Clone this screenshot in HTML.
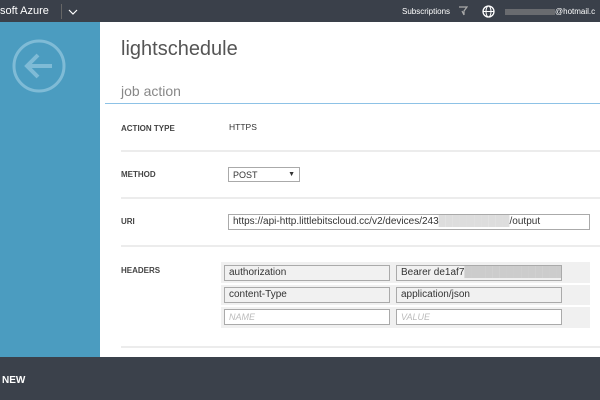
<!DOCTYPE html>
<html><head><style>
*{margin:0;padding:0;box-sizing:border-box}
body{width:600px;height:400px;overflow:hidden;position:relative;font-family:"Liberation Sans",sans-serif;background:#fff;color:#333}
.a{position:absolute}
.top{left:0;top:0;width:600px;height:22px;background:#3a404a;color:#fff}
.side{left:0;top:22px;width:100px;height:335px;background:#4b9cc0}
.foot{left:0;top:357px;width:600px;height:43px;background:#3b414b;color:#fff;font-weight:bold;font-size:10px}
.lbl{font-size:8px;font-weight:bold;color:#444;left:121px}
.hr{left:121px;width:479px;height:2px;background:#ececec}
.box{font-size:10px;border:1px solid #aaa;height:16px;line-height:14px;padding-left:4px;white-space:nowrap;overflow:hidden}
.g{background:#f1f1f1}
</style></head><body>
<div class="a top">
 <div class="a" style="left:0;top:5px;font-size:11px">soft Azure</div>
 <div class="a" style="left:61px;top:4px;width:1px;height:15px;background:#666"></div>
 <svg class="a" style="left:68px;top:9px" width="10" height="6"><path d="M1 1L5 5L9 1" fill="none" stroke="#fff" stroke-width="1.2"/></svg>
 <div class="a" style="left:402px;top:7px;font-size:8px">Subscriptions</div>
 <svg class="a" style="left:458px;top:6px" width="10" height="10"><path d="M1 1H9L6 5V9M4 5L6 9" fill="none" stroke="#aaa" stroke-width="1.2"/></svg>
 <svg class="a" style="left:482px;top:5px" width="13" height="13"><circle cx="6.5" cy="6.5" r="5.5" fill="none" stroke="#fff" stroke-width="1.3"/><ellipse cx="6.5" cy="6.5" rx="2.5" ry="5.5" fill="none" stroke="#fff"/><path d="M1 6.5H12" stroke="#fff"/></svg>
 <div class="a" style="left:505px;top:9px;width:50px;height:6px;background:#888;opacity:.6"></div>
 <div class="a" style="left:555px;top:7px;font-size:8px">@hotmail.c</div>
</div>
<div class="a side">
 <svg class="a" style="left:12px;top:17px" width="54" height="54"><circle cx="27" cy="27" r="25" fill="none" stroke="#7fbbd6" stroke-width="3"/><path d="M40 27H16M26 16L15 27L26 38" fill="none" stroke="#7fbbd6" stroke-width="4"/></svg>
</div>
<div class="a" style="left:121px;top:38px;font-size:20px;color:#555">lightschedule</div>
<div class="a" style="left:121px;top:83px;font-size:14px;color:#888">job action</div>
<div class="a" style="left:105px;top:103px;width:495px;height:1px;background:#8dc2e6"></div>
<div class="a lbl" style="top:124px">ACTION TYPE</div>
<div class="a" style="left:229px;top:122px;font-size:8.5px">HTTPS</div>
<div class="a hr" style="top:150px"></div>
<div class="a lbl" style="top:170px">METHOD</div>
<div class="a box" style="left:228px;top:167px;width:72px;height:15px;font-size:9px">POST<span style="position:absolute;right:4px;font-size:7px">&#9660;</span></div>
<div class="a hr" style="top:197px"></div>
<div class="a lbl" style="top:217px">URI</div>
<div class="a box" style="left:228px;top:214px;width:362px;font-size:10px">https://api-http.littlebitscloud.cc/v2/devices/243<span style="color:#ddd">██████████</span>/output</div>
<div class="a hr" style="top:245px"></div>
<div class="a lbl" style="top:266px">HEADERS</div>
<div class="a" style="left:221px;top:262px;width:369px;height:66px;background:#f0f0f0"></div>
<div class="a" style="left:221px;top:283px;width:369px;height:2px;background:#fff"></div>
<div class="a" style="left:221px;top:305px;width:369px;height:2px;background:#fff"></div>
<div class="a box g" style="left:224px;top:265px;width:166px">authorization</div>
<div class="a box g" style="left:396px;top:265px;width:166px">Bearer de1af7<span style="color:#ccc">█████████████████</span></div>
<div class="a box g" style="left:224px;top:287px;width:166px">content-Type</div>
<div class="a box g" style="left:396px;top:287px;width:166px">application/json</div>
<div class="a box" style="left:224px;top:309px;width:166px;background:#fff;color:#bbb;font-style:italic;font-size:9px">NAME</div>
<div class="a box" style="left:396px;top:309px;width:166px;background:#fff;color:#bbb;font-style:italic;font-size:9px">VALUE</div>
<div class="a hr" style="top:346px"></div>
<div class="a foot"><div class="a" style="left:2px;top:18px">NEW</div></div>
</body></html>
